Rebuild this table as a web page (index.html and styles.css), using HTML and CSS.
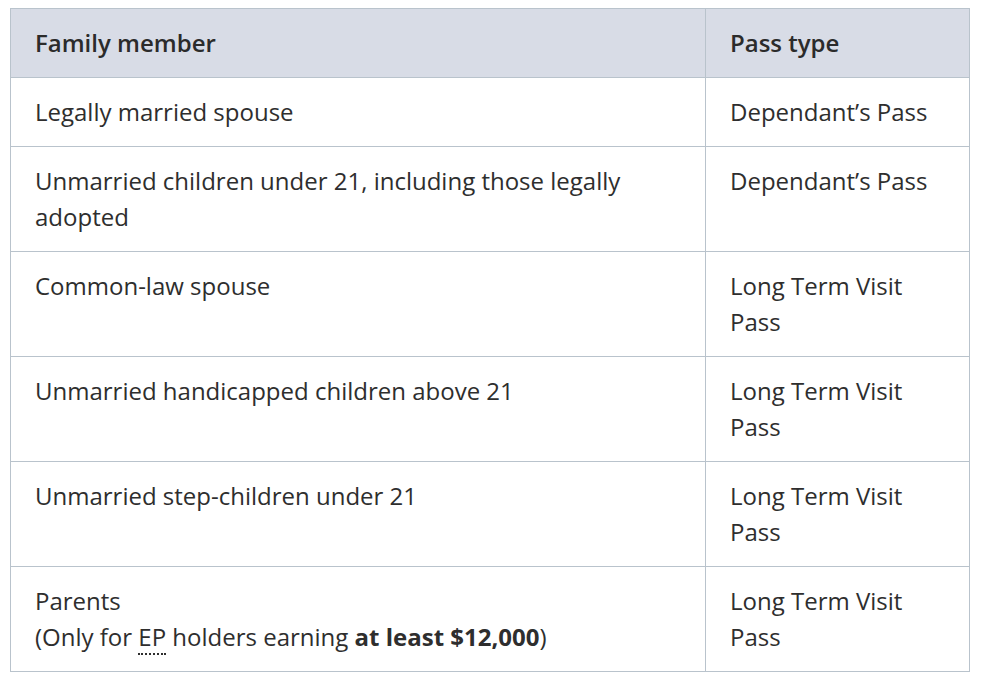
FILE: index.html
```html
<!DOCTYPE html>
<html lang="en">
<head>
<meta charset="utf-8">
<title>Family members</title>
<link rel="stylesheet" href="styles.css">
</head>
<body>
<table class="pass-table">
  <colgroup><col class="col-member"><col class="col-pass"></colgroup>
  <thead>
    <tr><th>Family member</th><th>Pass type</th></tr>
  </thead>
  <tbody>
    <tr><td>Legally married spouse</td><td>Dependant’s Pass</td></tr>
    <tr><td>Unmarried children under 21, including those legally adopted</td><td>Dependant’s Pass</td></tr>
    <tr><td>Common-law spouse</td><td>Long Term Visit Pass</td></tr>
    <tr><td>Unmarried handicapped children above 21</td><td>Long Term Visit Pass</td></tr>
    <tr><td>Unmarried step-children under 21</td><td>Long Term Visit Pass</td></tr>
    <tr><td>Parents<br>(Only for <abbr title="Employment Pass">EP</abbr> holders earning <strong>at least $12,000</strong>)</td><td>Long Term Visit Pass</td></tr>
  </tbody>
</table>
</body>
</html>
```
FILE: styles.css
```css
html, body {
  margin: 0;
  background: #ffffff;
}
body {
  padding: 8px 10px;
  font-family: "Open Sans", "Liberation Sans", sans-serif;
  font-size: 24px;
  line-height: 36px;
  color: #2e2e2e;
}
.pass-table {
  border-collapse: collapse;
  width: 959px;
  table-layout: fixed;
}
.col-member { width: 695px; }
.col-pass { width: 264px; }
.pass-table th,
.pass-table td {
  border: 1px solid #b9c3cc;
  padding: 16px 24px;
  text-align: left;
  vertical-align: top;
}
.pass-table th {
  background: #d8dce6;
  font-weight: 600;
  color: #2b2b2b;
}
.pass-table strong {
  font-weight: 700;
}
.pass-table abbr {
  text-decoration: none;
  border-bottom: 2px dotted #2e2e2e;
}
```
